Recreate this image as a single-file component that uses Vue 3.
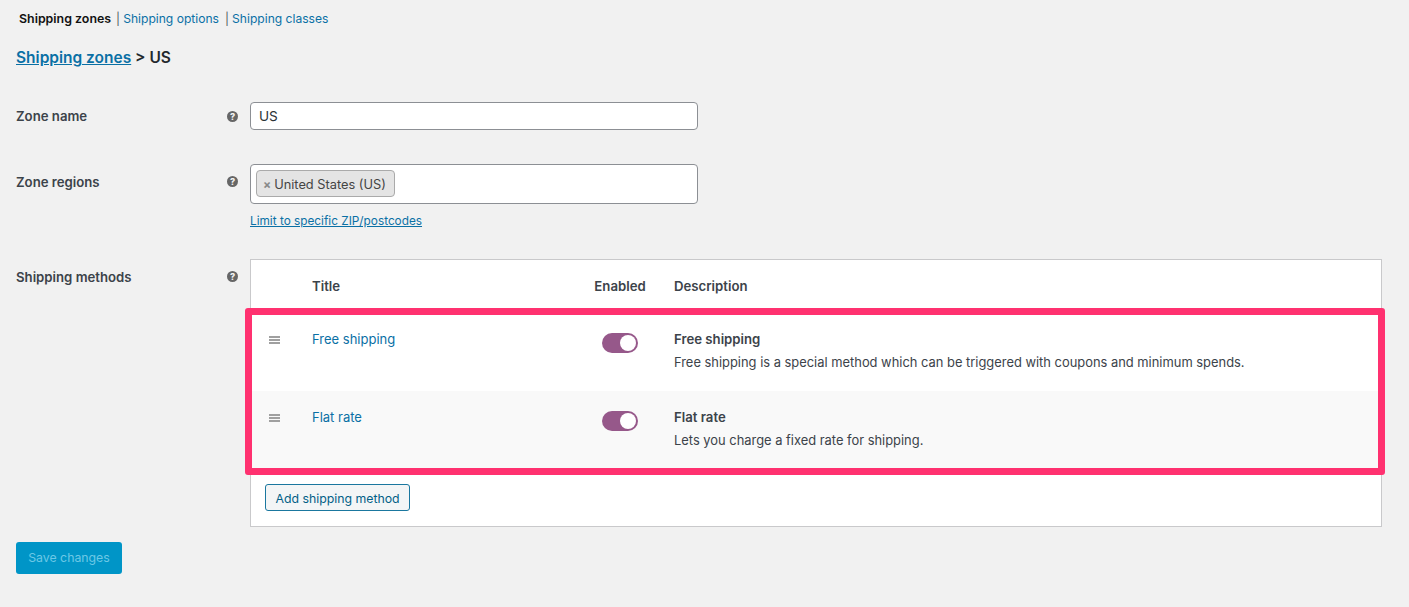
<script setup>
const methods = [
  { name: 'Free shipping', text: 'Free shipping is a special method which can be triggered with coupons and minimum spends.', alt: false },
  { name: 'Flat rate', text: 'Lets you charge a fixed rate for shipping.', alt: true },
]
</script>

<template>
  <div class="page">
    <nav class="subnav">
      <span class="current">Shipping zones</span>
      <span class="sep">|</span>
      <a class="link">Shipping options</a>
      <span class="sep second">|</span>
      <a class="link">Shipping classes</a>
    </nav>

    <h2 class="crumb"><a class="crumb-link">Shipping zones</a> &gt; US</h2>

    <section class="field-row name-row">
      <label class="label">Zone name</label>
      <span class="help">?</span>
      <div class="input">US</div>
    </section>

    <section class="field-row regions-row">
      <label class="label">Zone regions</label>
      <span class="help">?</span>
      <div>
        <div class="input multi">
          <span class="chip"><span class="chip-x">×</span>United States (US)</span>
        </div>
        <a class="limit">Limit to specific ZIP/postcodes</a>
      </div>
    </section>

    <section class="field-row methods-row">
      <label class="label">Shipping methods</label>
      <span class="help">?</span>
      <div class="card">
        <div class="grid head">
          <span></span>
          <span>Title</span>
          <span class="center">Enabled</span>
          <span class="desc">Description</span>
        </div>
        <div v-for="m in methods" :key="m.name" class="grid row" :class="{ alt: m.alt }">
          <span class="drag"><i></i><i></i><i></i></span>
          <a class="link method">{{ m.name }}</a>
          <span class="center"><span class="toggle"><span class="knob"></span></span></span>
          <div class="desc">
            <strong>{{ m.name }}</strong>
            <p>{{ m.text }}</p>
          </div>
        </div>
        <div class="foot">
          <button class="add">Add shipping method</button>
        </div>
        <div class="highlight"></div>
      </div>
    </section>

    <button class="save">Save changes</button>
  </div>
</template>

<style>
html, body { margin: 0; background: #f1f1f1; }
</style>

<style scoped>
.page {
  box-sizing: border-box;
  height: 607px;
  padding: 10px 27px 0 16px;
  background: #f1f1f1;
  color: #3c434a;
  font: 13px/20px Inter, "Liberation Sans", sans-serif;
  overflow: hidden;
}
.subnav { display: flex; align-items: center; height: 18px; padding-left: 3px; font-size: 12.1px; line-height: 18px; }
.current { font-size: 12.4px; font-weight: 600; color: #111; margin-right: 5px; }
.sep { margin-right: 3px; color: #50575e; }
.sep.second { margin-left: 6px; margin-right: 3px; }
.link { color: #0a70a5; }
.crumb { margin: 20px 0 0; font-size: 15.5px; line-height: 20px; font-weight: 600; color: #23282d; }
.crumb-link { color: #0a70a5; text-decoration: underline; }
.field-row { display: grid; grid-template-columns: 211px 23px 1fr; }
.label { font-size: 13.2px; font-weight: 600; color: #3c434a; }
.name-row { margin-top: 34px; align-items: center; }
.regions-row { margin-top: 34px; }
.regions-row .label { margin-top: 8px; }
.regions-row .help { margin-top: 12px; }
.methods-row { margin-top: 29px; }
.methods-row .label { margin-top: 8px; }
.methods-row .help { margin-top: 12px; }
.help {
  width: 11px; height: 11px; border-radius: 50%;
  background: #666; color: #f1f1f1;
  font-size: 9px; line-height: 11px; font-weight: 800; text-align: center;
}
.input {
  box-sizing: border-box;
  width: 448px; height: 28px; padding: 0 8px;
  border: 1px solid #8c8f94; border-radius: 4px;
  background: #fff; color: #2c3338; font-size: 13.6px; line-height: 26px;
}
.multi { height: 40px; padding: 5px; }
.chip {
  display: inline-flex; align-items: center; box-sizing: border-box;
  height: 27px; padding: 2px 8px 0 6px;
  border: 1px solid #aaa; border-radius: 4px; background: #e4e4e4;
  color: #444; font-size: 12.8px;
}
.chip-x { margin-right: 3px; color: #888; font-weight: 700; font-size: 12px; }
.limit { display: block; margin-top: 8px; color: #0a70a5; font-size: 11.8px; line-height: 18px; text-decoration: underline; }
.card { position: relative; width: 1132px; box-sizing: border-box; border: 1px solid #c9c9cb; background: #fff; }
.grid { display: grid; grid-template-columns: 61px 264px 88px 1fr; }
.head { box-sizing: border-box; height: 53px; padding-bottom: 2px; align-items: center; font-size: 13.2px; font-weight: 600; }
.center { text-align: center; }
.desc { padding-left: 10px; }
.row { box-sizing: border-box; height: 78px; padding-top: 16px; }
.alt { background: #f9f9f9; }
.drag { display: flex; flex-direction: column; gap: 1px; width: 11px; margin: 7px 0 0 18px; }
.drag i { display: block; height: 2px; background: #a0a0a0; }
.method { display: block; }
.toggle {
  display: inline-flex; justify-content: flex-end; align-items: center; box-sizing: border-box;
  width: 36px; height: 20px; padding: 0 2px; margin-top: 4px;
  border-radius: 10px; background: #96588a;
}
.knob { width: 16px; height: 16px; border-radius: 50%; background: #fff; }
.desc strong { display: block; font-size: 13.2px; font-weight: 600; }
.desc p { margin: 4px 0 0; font-size: 12.9px; }
.foot { padding: 15px 0 15px 14px; }
.add {
  display: block; box-sizing: border-box; width: 145px; height: 27px; padding: 1px 0 0;
  border: 1px solid #1a779f; border-radius: 3px; background: #f3f5f6;
  color: #016087; font: inherit; font-size: 12.3px; line-height: 25px;
}
.highlight {
  position: absolute; left: -6px; right: -4px; top: 48px; height: 167px;
  box-sizing: border-box; border: 7px solid #ff3170; border-radius: 3px;
}
.save {
  display: block; box-sizing: border-box; width: 106px; height: 32px; margin-top: 15px; padding: 0;
  border: 0; border-radius: 3px; background: #0095c7;
  color: #6cc8e6; font: inherit; font-size: 12.3px;
}
</style>
